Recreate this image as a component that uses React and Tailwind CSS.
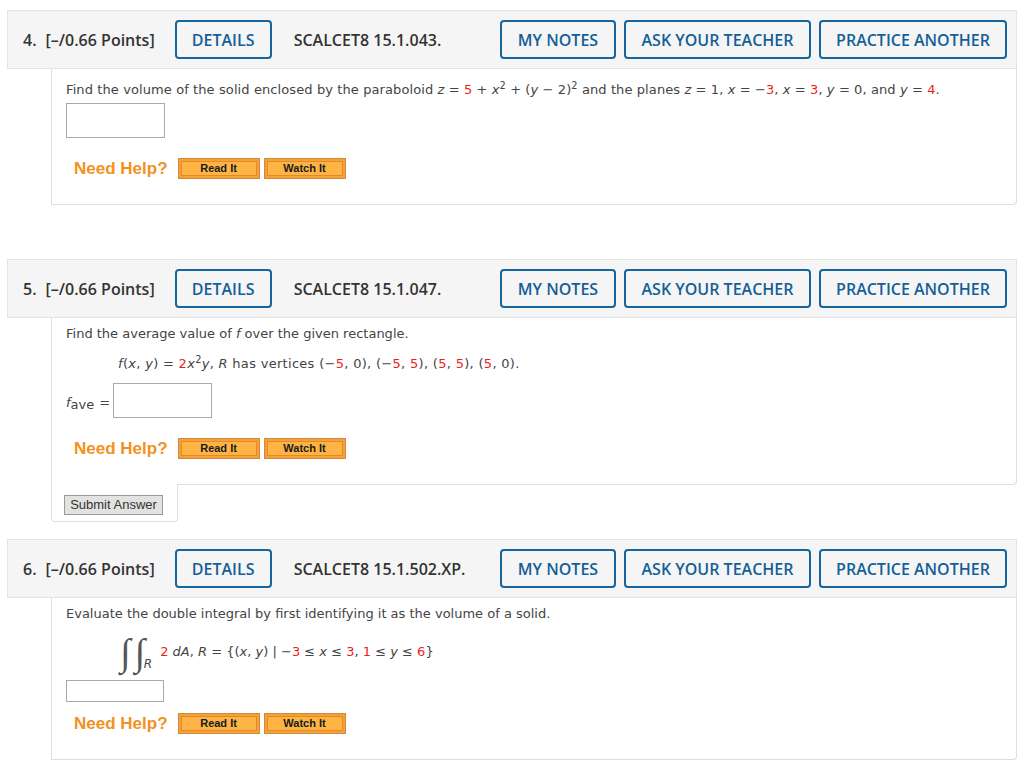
import React from "react";

const R = ({ children }) => <span className="text-[#ee1c1c]">{children}</span>;
const I = ({ children }) => <i>{children}</i>;

function Header({ num, code }) {
  return (
    <div className="flex items-center h-[59px] bg-[#f5f5f5] border border-[#e4e4e4] pl-[15px] pr-[9px] font-['Open_Sans',sans-serif] text-[16px]">
      <span className="font-semibold text-[#333]">{num}.</span>
      <span className="ml-[9px] font-semibold text-[#333]">[–/0.66 Points]</span>
      <button className="ml-[20px] h-[39px] w-[97px] border-2 border-[#17659d] rounded-[4px] text-[#155f98] font-semibold">DETAILS</button>
      <span className="ml-[22px] font-semibold text-[#333]">{code}</span>
      <div className="ml-auto flex gap-[8px]">
        <button className="h-[39px] w-[116px] border-2 border-[#17659d] rounded-[4px] text-[#155f98] font-semibold">MY NOTES</button>
        <button className="h-[39px] w-[187px] border-2 border-[#17659d] rounded-[4px] text-[#155f98] font-semibold">ASK YOUR TEACHER</button>
        <button className="h-[39px] w-[188px] border-2 border-[#17659d] rounded-[4px] text-[#155f98] font-semibold">PRACTICE ANOTHER</button>
      </div>
    </div>
  );
}

function HelpBtn({ label }) {
  return (
    <div className="h-[21px] w-[82px] border border-[#d08a40] bg-[#f6a036] p-[2px]">
      <div className="h-full w-full border border-[#e08a2a] bg-[#fdb445] flex items-center justify-center font-['Liberation_Sans',sans-serif] font-bold text-[11px] text-[#1a1a1a] leading-none">
        {label}
      </div>
    </div>
  );
}

function NeedHelp({ className }) {
  return (
    <div className={"flex items-center ml-[8px] " + (className || "")}>
      <span className="font-['Liberation_Sans',sans-serif] font-bold text-[17px] text-[#f39120] leading-none">Need Help?</span>
      <div className="ml-[10px] flex gap-[4px]">
        <HelpBtn label="Read It" />
        <HelpBtn label="Watch It" />
      </div>
    </div>
  );
}

const bodyCls =
  "ml-[44px] border-l border-r border-b border-[#dedede] rounded-br-[4px] pl-[14px] font-['DejaVu_Sans',Verdana,sans-serif] text-[13px] text-[#444] bg-white";

export default function App() {
  return (
    <div className="min-h-screen bg-white pt-[10px] px-[7px] pb-[8px]">
      {/* Question 4 */}
      <Header num="4" code="SCALCET8 15.1.043." />
      <div className={bodyCls + " pt-[12px] pb-[25px]"}>
        <div className="leading-[17px] tracking-[0.1px]">
          Find the volume of the solid enclosed by the paraboloid <I>z</I> = <R>5</R> + <I>x</I><sup>2</sup> + (<I>y</I> − 2)<sup>2</sup> and the planes <I>z</I> = 1, <I>x</I> = −<R>3</R>, <I>x</I> = <R>3</R>, <I>y</I> = 0, and <I>y</I> = <R>4</R>.
        </div>
        <div className="mt-[5px] h-[35px] w-[99px] border border-[#a9a9a9] bg-white" />
        <NeedHelp className="mt-[20px]" />
      </div>

      {/* Question 5 */}
      <div className="mt-[54px]">
        <Header num="5" code="SCALCET8 15.1.047." />
        <div className={bodyCls + " pt-[7px] pb-[25px]"}>
          <div className="leading-[17px]">
            Find the average value of <I>f</I> over the given rectangle.
          </div>
          <div className="mt-[13px] ml-[52px] leading-[17px] tracking-[0.3px]">
            <I>f</I>(<I>x</I>, <I>y</I>) = <R>2</R><I>x</I><sup>2</sup><I>y</I>, <I>R</I> has vertices (−<R>5</R>, 0), (−<R>5</R>, <R>5</R>), (<R>5</R>, <R>5</R>), (<R>5</R>, 0).
          </div>
          <div className="mt-[11px] flex items-center">
            <span className="mt-[4px]">
              <I>f</I>
              <sub className="text-[13px] -bottom-[0.2em]">ave</sub>
              <span className="ml-[5px]">=</span>
            </span>
            <div className="ml-[3px] h-[35px] w-[99px] border border-[#a9a9a9] bg-white" />
          </div>
          <NeedHelp className="mt-[20px]" />
        </div>
        <div className="ml-[44px] -mt-px w-[127px] h-[38px] bg-white border-l border-r border-b border-[#dedede] rounded-b-[4px] pl-[12px] pt-[7px]">
          <button className="h-[20px] w-[99px] bg-[#e2e2e2] border border-[#9a9a9a] font-['Liberation_Sans',sans-serif] text-[13px] text-[#333] leading-none">
            Submit Answer
          </button>
        </div>
      </div>

      {/* Question 6 */}
      <div className="mt-[17px]">
        <Header num="6" code="SCALCET8 15.1.502.XP." />
        <div className={bodyCls + " pt-[7px] pb-[25px]"}>
          <div className="leading-[17px]">
            Evaluate the double integral by first identifying it as the volume of a solid.
          </div>
          <div className="mt-[9px] ml-[54px] flex items-center h-[40px]">
            <span className="inline-flex items-end h-[40px]">
              <span className="font-['Liberation_Serif',serif] text-[38px] leading-[38px] text-[#555]">∫</span>
              <span className="font-['Liberation_Serif',serif] text-[38px] leading-[38px] text-[#555] ml-[4px]">∫</span>
              <span className="italic text-[12px] leading-none mb-[1px] -ml-[1px]">R</span>
            </span>
            <span className="ml-[8px] mt-[2px]">
              <R>2</R> <I>dA</I>, <I>R</I> = {"{"}(<I>x</I>, <I>y</I>) | −<R>3</R> ≤ <I>x</I> ≤ <R>3</R>, <R>1</R> ≤ <I>y</I> ≤ <R>6</R>{"}"}
            </span>
          </div>
          <div className="mt-[9px] h-[22px] w-[98px] border border-[#a9a9a9] bg-white" />
          <NeedHelp className="mt-[11px]" />
        </div>
      </div>
    </div>
  );
}
